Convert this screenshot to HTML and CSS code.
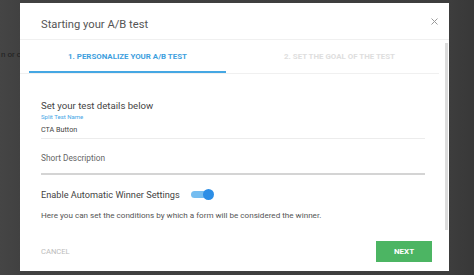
FILE: index.html
```html
<!DOCTYPE html>
<html>
<head>
<meta charset="utf-8">
<link rel="stylesheet" href="styles.css">
</head>
<body>
<div class="page">
  <div class="page-text">n or c</div>
</div>
<div class="modal">
  <div class="modal-header">
    <div class="modal-title">Starting your A/B test</div>
    <svg class="close" width="7" height="7" viewBox="0 0 7 7"><path d="M0.5 0.5L6.5 6.5M6.5 0.5L0.5 6.5" stroke="#9a9a9a" stroke-width="1" fill="none"/></svg>
  </div>
  <div class="modal-body">
    <div class="scroll">
      <div class="tabs">
        <div class="tab active">1. PERSONALIZE YOUR A/B TEST</div>
        <div class="tab">2. SET THE GOAL OF THE TEST</div>
      </div>
      <div class="content">
        <div class="section-title">Set your test details below</div>
        <div class="field">
          <div class="field-label">Split Test Name</div>
          <div class="field-value">CTA Button</div>
        </div>
        <div class="field field-empty">
          <div class="field-placeholder">Short Description</div>
        </div>
        <div class="toggle-row">
          <span class="toggle-label">Enable Automatic Winner Settings</span>
          <span class="toggle"><span class="knob"></span></span>
        </div>
        <div class="hint">Here you can set the conditions by which a form will be considered the winner.</div>
      </div>
    </div>
    <div class="scrollbar"></div>
  </div>
  <div class="modal-footer">
    <div class="cancel">CANCEL</div>
    <div class="next">NEXT</div>
  </div>
</div>
</body>
</html>
```
FILE: styles.css
```css
* { box-sizing: border-box; }
html, body { margin: 0; padding: 0; }
body {
  width: 474px;
  height: 275px;
  overflow: hidden;
  background: #3b3b3b;
  font-family: Roboto, "Noto Sans", sans-serif;
  position: relative;
}
.page {
  width: 100%;
  height: 100%;
  background: linear-gradient(90deg, #454545 0, #414141 20px, #3d3d3d 450px, #383838 474px);
  padding-top: 50px;
}
.page-text {
  font-size: 8px;
  color: #1e1e1e;
  margin-left: 1px;
}
.modal {
  position: absolute;
  left: 20px;
  top: 3px;
  width: 429px;
  height: 268px;
  background: #fff;
  display: flex;
  flex-direction: column;
}
.modal-header {
  height: 37px;
  border-bottom: 1px solid #f0f0f0;
  display: flex;
  align-items: flex-start;
  justify-content: space-between;
  padding: 0 11px 0 21px;
}
.modal-title {
  font-size: 11.2px;
  color: #555;
  margin-top: 15px;
}
.close {
  display: block;
  margin-top: 15px;
}
.modal-body {
  flex: 1;
  display: flex;
  min-height: 0;
}
.scroll {
  flex: 1;
  min-width: 0;
}
.scrollbar {
  width: 3px;
  margin: 3px 1px 0 0;
  background: #dcdcdc;
}
.tabs {
  display: flex;
  gap: 15px;
  padding-left: 9px;
  border-bottom: 1px solid #f0f0f0;
  margin-right: 6px;
}
.tab {
  width: 197px;
  height: 33px;
  display: flex;
  align-items: center;
  justify-content: center;
  font-size: 7.9px;
  font-weight: 700;
  color: #dedede;
  border-bottom: 2px solid transparent;
  padding-top: 1px;
}
.tab.active {
  color: #3ea0de;
  border-bottom-color: #45a7e3;
}
.content {
  padding: 25px 20px 0 21px;
}
.section-title {
  font-size: 9.6px;
  color: #444;
  line-height: 13px;
}
.field {
  border-bottom: 1px solid #ececec;
  padding-top: 1px;
  height: 27px;
}
.field-label {
  font-size: 6px;
  color: #46a6e6;
  line-height: 8px;
}
.field-value {
  font-size: 7.2px;
  color: #444;
  margin-top: 4px;
  line-height: 10px;
}
.field-empty {
  height: 36px;
  border-bottom: 2px solid #d4d4d4;
  display: flex;
  align-items: center;
  padding-top: 3px;
}
.field-placeholder {
  font-size: 8.3px;
  color: #666;
}
.toggle-row {
  display: flex;
  align-items: center;
  gap: 11px;
  margin-top: 12px;
  height: 14px;
}
.toggle-label {
  font-size: 9.2px;
  color: #444;
}
.toggle {
  position: relative;
  width: 20px;
  height: 7px;
  border-radius: 4px;
  background: #75bdf0;
}
.knob {
  position: absolute;
  right: -3px;
  top: -2px;
  width: 11px;
  height: 11px;
  border-radius: 50%;
  background: #2c8ee6;
}
.hint {
  margin-top: 9px;
  font-size: 8.1px;
  color: #555;
}
.modal-footer {
  height: 41px;
  display: flex;
  align-items: center;
  justify-content: space-between;
  padding: 2px 17px 0 21px;
}
.cancel {
  font-size: 7.6px;
  color: #bcbcbc;
}
.next {
  width: 56px;
  height: 21px;
  background: #4cb563;
  color: #fff;
  font-size: 8px;
  font-weight: 700;
  display: flex;
  align-items: center;
  justify-content: center;
}
```
